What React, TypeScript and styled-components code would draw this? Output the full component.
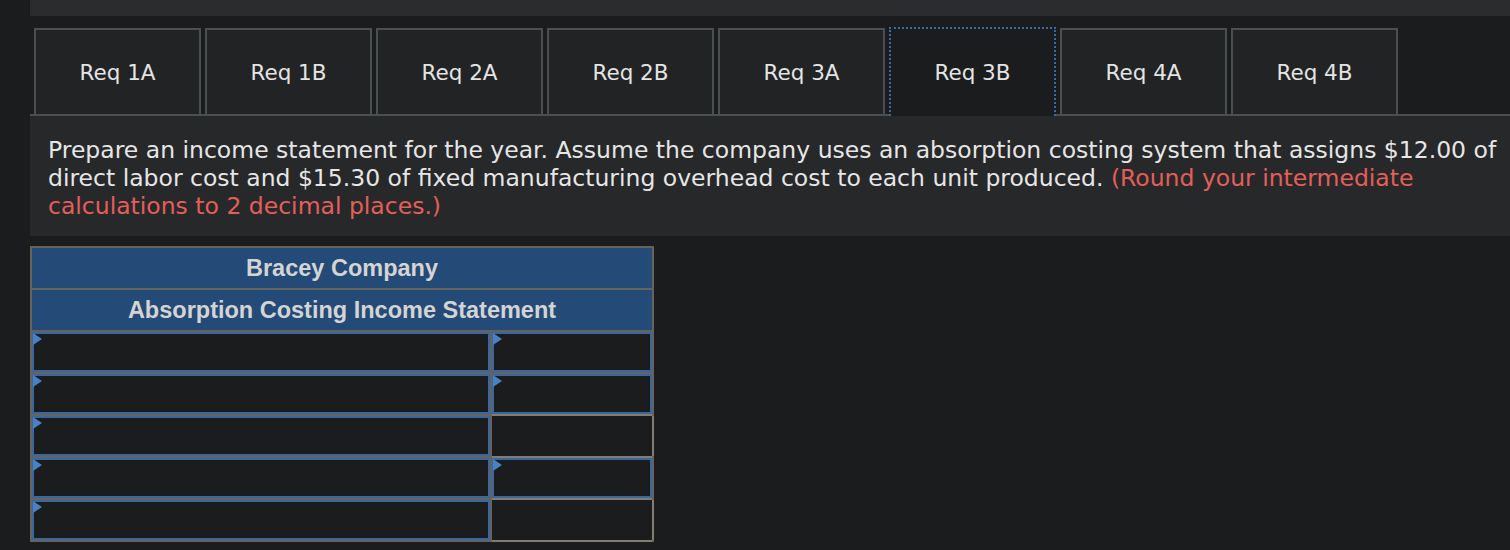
import React from "react";
import styled, { createGlobalStyle, css } from "styled-components";

const GlobalStyle = createGlobalStyle`
  html, body {
    margin: 0;
    padding: 0;
    background: #1b1c1e;
  }
  body {
    font-family: "DejaVu Sans", Verdana, sans-serif;
    width: 1510px;
    height: 550px;
    overflow: hidden;
  }
`;

const Page = styled.div`
  display: flex;
  min-height: 550px;
  background: #1b1c1e;
`;

const Gutter = styled.div`
  flex: 0 0 30px;
`;

const Main = styled.div`
  flex: 1;
  display: flex;
  flex-direction: column;
`;

const TopBar = styled.div`
  height: 16px;
  background: #2b2c2e;
`;

const TabBar = styled.div`
  display: flex;
  gap: 4px;
  padding: 12px 0 0 4px;
  height: 86px;
  border-bottom: 2px solid #4a4f51;
`;

const Tab = styled.div<{ $active?: boolean }>`
  box-sizing: border-box;
  width: 167px;
  height: 86px;
  display: flex;
  align-items: center;
  justify-content: center;
  background: #222325;
  border: 2px solid #4a4f51;
  border-bottom: none;
  color: #e4e4e4;
  font-size: 21.5px;
  ${(p) =>
    p.$active &&
    css`
      background: #1b1c1e;
      border: 2px dotted #3a6aa8;
      border-bottom: none;
      height: 89px;
      margin-top: -1px;
      position: relative;
      z-index: 1;
    `}
`;

const Prompt = styled.div`
  background: #27282a;
  padding: 20px 2px 16px 18px;
  font-size: 23.5px;
  line-height: 28px;
  color: #e6e6e6;
  white-space: nowrap;
`;

const Note = styled.span`
  color: #e35f5a;
`;

const Statement = styled.div`
  margin-top: 10px;
  box-sizing: border-box;
  width: 624px;
  display: grid;
  grid-template-columns: 458px 160px;
  gap: 2px;
  background: #66625c;
  border: 2px solid #66625c;
`;

const HeaderCell = styled.div`
  grid-column: 1 / -1;
  height: 40px;
  display: flex;
  align-items: center;
  justify-content: center;
  background: #244a77;
  color: #d4d4d4;
  font-family: "Liberation Sans", Arial, sans-serif;
  font-weight: bold;
  font-size: 23.5px;
`;

const Cell = styled.div<{ $input?: boolean }>`
  position: relative;
  box-sizing: border-box;
  height: 40px;
  background: #1b1c1e;
  ${(p) =>
    p.$input
      ? css`
          border: 2px solid #3b67a0;
          &::before {
            content: "";
            position: absolute;
            top: -1px;
            left: -1px;
            border-style: solid;
            border-width: 6px 0 6px 9px;
            border-color: transparent transparent transparent #4a80c4;
          }
        `
      : css`
          box-shadow: 0 -2px 0 #837c70, 0 2px 0 #837c70, 2px 0 0 #837c70;
        `}
`;

const tabs = ["Req 1A", "Req 1B", "Req 2A", "Req 2B", "Req 3A", "Req 3B", "Req 4A", "Req 4B"];
const rows = [true, true, false, true, false];

export default function App() {
  return (
    <>
      <GlobalStyle />
      <Page>
        <Gutter />
        <Main>
          <TopBar />
          <TabBar>
            {tabs.map((t) => (
              <Tab key={t} $active={t === "Req 3B"}>
                {t}
              </Tab>
            ))}
          </TabBar>
          <Prompt>
            Prepare an income statement for the year. Assume the company uses an absorption costing system that assigns $12.00 of
            <br />
            direct labor cost and $15.30 of fixed manufacturing overhead cost to each unit produced.{" "}
            <Note>
              (Round your intermediate
              <br />
              calculations to 2 decimal places.)
            </Note>
          </Prompt>
          <Statement>
            <HeaderCell>Bracey Company</HeaderCell>
            <HeaderCell>Absorption Costing Income Statement</HeaderCell>
            {rows.map((rightInput, i) => (
              <React.Fragment key={i}>
                <Cell $input />
                <Cell $input={rightInput} />
              </React.Fragment>
            ))}
          </Statement>
        </Main>
      </Page>
    </>
  );
}
